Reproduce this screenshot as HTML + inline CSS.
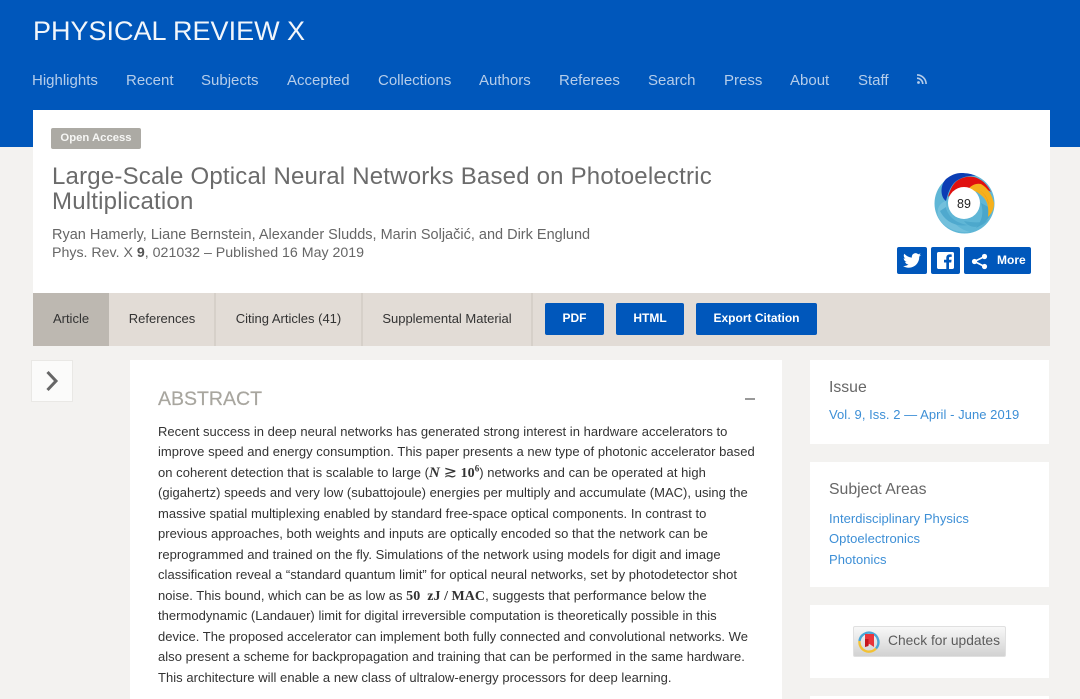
<!DOCTYPE html>
<html><head><meta charset="utf-8"><style>
*{box-sizing:border-box}
html,body{margin:0;padding:0}
body{width:1080px;height:699px;overflow:hidden;position:relative;background:#f3f2f0;font-family:"Liberation Sans",sans-serif;color:#333}
.a{position:absolute;white-space:nowrap}
.nav{top:71px;font-size:15px;line-height:20px;color:#b5cdea}
.tab{top:293px;height:53px;line-height:52px;font-size:13px;color:#333;text-align:center;background:#e2dcd6;border-right:2px solid #d6d0c9}
.btn{top:303px;height:32px;line-height:30px;background:#0057bb;color:#fff;font-size:12px;font-weight:bold;text-align:center;border-radius:2px}
.l{left:158px;font-size:13px;line-height:20px;color:#333;letter-spacing:.03px}
.card{background:#fff;left:810px;width:239px}
.lnk{left:829px;font-size:13px;line-height:18px;color:#3d8fd6;letter-spacing:.05px}
.h{left:829px;font-size:15.8px;line-height:20px;color:#666}
.sb{background:#0057bb;border-radius:2px;top:247px;height:27px}
.m{font-family:"Liberation Serif",serif;font-weight:bold}
</style></head><body>
<div class="a" style="left:0;top:0;width:1080px;height:147px;background:#0057bb"></div>
<div class="a" style="left:33px;top:12px;font-size:27px;line-height:38px;color:#f2f6fb">PHYSICAL REVIEW X</div>
<div class="a nav" style="left:32px">Highlights</div>
<div class="a nav" style="left:126px">Recent</div>
<div class="a nav" style="left:201px">Subjects</div>
<div class="a nav" style="left:287px">Accepted</div>
<div class="a nav" style="left:378px">Collections</div>
<div class="a nav" style="left:479px">Authors</div>
<div class="a nav" style="left:559px">Referees</div>
<div class="a nav" style="left:648px">Search</div>
<div class="a nav" style="left:724px">Press</div>
<div class="a nav" style="left:790px">About</div>
<div class="a nav" style="left:858px">Staff</div>
<svg class="a" style="left:917px;top:74px" width="10" height="10" viewBox="0 0 10 10"><circle cx="1.5" cy="8.5" r="1.4" fill="#b5cdea"/><path d="M0 4.2a5.8 5.8 0 0 1 5.8 5.8M0 .9A9.1 9.1 0 0 1 9.1 10" fill="none" stroke="#b5cdea" stroke-width="1.6"/></svg>

<div class="a" style="left:33px;top:110px;width:1017px;height:183px;background:#fff"></div>
<div class="a" style="left:51px;top:128px;width:90px;height:21px;background:#acaaa4;border-radius:2px;color:#f6f6f4;font-size:11.3px;font-weight:bold;line-height:21px;text-align:center">Open Access</div>
<div class="a" style="left:52px;top:164px;font-size:24px;line-height:25px;color:#6b6b6b;letter-spacing:.2px">Large-Scale Optical Neural Networks Based on Photoelectric<br>Multiplication</div>
<div class="a" style="left:52px;top:226px;font-size:14.5px;line-height:18px;color:#666">Ryan Hamerly, Liane Bernstein, Alexander Sludds, Marin Soljačić, and Dirk Englund</div>
<div class="a" style="left:52px;top:244px;font-size:14.2px;line-height:18px;color:#666">Phys. Rev. X <b style="color:#555">9</b>, 021032 – Published 16 May 2019</div>

<svg class="a" style="left:934px;top:173px" width="61" height="61" viewBox="0 0 61 61">
<circle cx="30.5" cy="30.500" r="30" fill="#5fb6d6"/>
<path d="M12 28C4 30 1 40 6 47 12 56 24 60 36 59 24 56 12 46 12 28Z" fill="#73c0dc"/>
<path d="M30 48C36 56 46 56 54 47 48 50 40 50 30 48Z" fill="#4da8cc"/>
<path d="M47 30C50 40 48 48 42 55 52 50 58 42 58 36Z" fill="#4aa6cb"/>
<path d="M12 34C14 44 22 50 34 52 24 54 12 50 6 38Z" fill="#4fa9ce"/>
<path d="M12 28C6 24 6 12 12 6 17 2 22 0 27 0 33 0 38 1 42 3 36 2 27 4 21 9 16 14 14 20 12 28Z" fill="#0b3db4"/>
<path d="M14 24C17 14 20 9 26 6 32 3 38 3 43 5 50 8 54 13 57 19 53 16 48 15 42 15 32 14 22 16 14 24Z" fill="#e0100f"/>
<path d="M34 16C38 12 42 10 47 11 54 15 58 22 60 30 60 36 58 40 54 44 55 36 54 28 48 23 44 19 39 17 34 16Z" fill="#f5b01c"/>
<path d="M45 17C50 20 54 25 55 32L53 26C51 22 48 19 45 17Z" fill="#e9801a"/>
<circle cx="30" cy="30" r="16" fill="#fff"/>
<text x="30" y="35" text-anchor="middle" font-family="Liberation Sans" font-size="12.500" fill="#222">89</text></svg>

<div class="a sb" style="left:897px;width:30px"></div>
<svg class="a" style="left:903px;top:253px" width="18" height="15" viewBox="0 0 18 15"><path d="M18 1.800c-.7.3-1.400.5-2.100.6.8-.5 1.300-1.200 1.600-2-.7.4-1.500.7-2.300.9A3.700 3.700 0 0 0 8.900 4.600C5.900 4.400 3.200 3 1.300.7.300 2.400.800 4.500 2.400 5.600c-.6 0-1.200-.2-1.700-.5 0 1.800 1.300 3.300 3 3.700-.5.100-1.100.2-1.700.1.500 1.500 1.900 2.500 3.500 2.600A7.500 7.500 0 0 1 0 13c1.700 1.100 3.600 1.700 5.700 1.700 6.900 0 10.800-5.800 10.500-11 .7-.5 1.300-1.200 1.800-1.900z" fill="#fff"/></svg>
<div class="a sb" style="left:931px;width:29px"></div>
<svg class="a" style="left:937px;top:252px" width="17" height="17" viewBox="0 0 17 17"><path d="M1.500 0h14c.8 0 1.500.7 1.500 1.500v14c0 .8-.7 1.500-1.500 1.500H12v-6.500h2.200l.4-2.700H12V6.200c0-.8.300-1.300 1.300-1.300h1.400V2.500c-.3 0-1.100-.1-2-.1-2 0-3.400 1.200-3.400 3.500v1.900H7v2.700h2.300V17H1.500C.7 17 0 16.300 0 15.500v-14C0 .7.700 0 1.500 0z" fill="#fff"/></svg>
<div class="a sb" style="left:964px;width:67px"></div>
<svg class="a" style="left:971px;top:253px" width="17" height="17" viewBox="0 0 17 17"><path d="M13.500 3.500 3.500 8.500l10 5" fill="none" stroke="#fff" stroke-width="1.700"/><circle cx="13.500" cy="3.500" r="2.600" fill="#fff"/><circle cx="3.500" cy="8.500" r="2.600" fill="#fff"/><circle cx="13.500" cy="13.500" r="2.600" fill="#fff"/></svg>
<div class="a" style="left:997px;top:253px;font-size:12px;line-height:15px;font-weight:bold;color:#fff">More</div>

<div class="a" style="left:33px;top:293px;width:1017px;height:53px;background:#e2dcd6"></div>
<div class="a tab" style="left:33px;width:76px;background:#bdb8b1;border:0">Article</div>
<div class="a tab" style="left:109px;width:107px;padding-left:1px">References</div>
<div class="a tab" style="left:216px;width:147px">Citing Articles (41)</div>
<div class="a tab" style="left:363px;width:170px">Supplemental Material</div>
<div class="a btn" style="left:545px;width:59px">PDF</div>
<div class="a btn" style="left:616px;width:68px">HTML</div>
<div class="a btn" style="left:696px;width:121px">Export Citation</div>

<div class="a" style="left:31px;top:360px;width:42px;height:42px;background:#fbfbfa;border:1px solid #e9e8e5"></div>
<svg class="a" style="left:45px;top:370px" width="14" height="22" viewBox="0 0 14 22"><path d="M2.500 2 11 11l-8.500 9" fill="none" stroke="#666" stroke-width="3"/></svg>

<div class="a" style="left:130px;top:360px;width:652px;height:339px;background:#fff"></div>
<div class="a" style="left:158px;top:387px;font-size:19.500px;line-height:24px;color:#a8a69f;-webkit-text-stroke:.2px #a8a69f">ABSTRACT</div>
<div class="a" style="left:745px;top:398px;width:10px;height:2px;background:#999"></div>
<div class="a l" style="top:422px">Recent success in deep neural networks has generated strong interest in hardware accelerators to</div>
<div class="a l" style="top:442px">improve speed and energy consumption. This paper presents a new type of photonic accelerator based</div>
<div class="a l" style="top:463px">on coherent detection that is scalable to large (<i class="m" style="font-size:15px">N</i> <span style="font-family:'Liberation Serif',serif;font-size:16px">≳</span> <span class="m" style="font-size:14px">10<sup style="font-size:9px;line-height:0">6</sup></span>) networks and can be operated at high</div>
<div class="a l" style="top:483px">(gigahertz) speeds and very low (subattojoule) energies per multiply and accumulate (MAC), using the</div>
<div class="a l" style="top:504px">massive spatial multiplexing enabled by standard free-space optical components. In contrast to</div>
<div class="a l" style="top:524px">previous approaches, both weights and inputs are optically encoded so that the network can be</div>
<div class="a l" style="top:545px">reprogrammed and trained on the fly. Simulations of the network using models for digit and image</div>
<div class="a l" style="top:565px">classification reveal a “standard quantum limit” for optical neural networks, set by photodetector shot</div>
<div class="a l" style="top:586px">noise. This bound, which can be as low as <span class="m" style="font-size:14px">50&nbsp; zJ / MAC</span>, suggests that performance below the</div>
<div class="a l" style="top:606px">thermodynamic (Landauer) limit for digital irreversible computation is theoretically possible in this</div>
<div class="a l" style="top:627px">device. The proposed accelerator can implement both fully connected and convolutional networks. We</div>
<div class="a l" style="top:647px">also present a scheme for backpropagation and training that can be performed in the same hardware.</div>
<div class="a l" style="top:668px">This architecture will enable a new class of ultralow-energy processors for deep learning.</div>

<div class="a card" style="top:360px;height:84px"></div>
<div class="a h" style="top:378px">Issue</div>
<div class="a lnk" style="top:406px">Vol. 9, Iss. 2 — April - June 2019</div>
<div class="a card" style="top:462px;height:125px"></div>
<div class="a h" style="top:480px">Subject Areas</div>
<div class="a lnk" style="top:510px">Interdisciplinary Physics</div>
<div class="a lnk" style="top:530px">Optoelectronics</div>
<div class="a lnk" style="top:551px">Photonics</div>
<div class="a card" style="top:605px;height:73px"></div>
<div class="a" style="left:853px;top:626px;width:153px;height:31px;border:1px solid #e0e0e0;border-radius:2px;background:linear-gradient(#f8f8f8,#d2d2d2)"></div>
<svg class="a" style="left:858px;top:630px" width="22" height="24" viewBox="0 0 22 24"><path d="M1.500 11A9.500 9.500 0 1 1 18 18.500" fill="none" stroke="#4aa5d6" stroke-width="2.400"/><path d="M1.500 11A9.500 9.500 0 0 0 18 18.500" fill="none" stroke="#f3c234" stroke-width="2.400"/><path d="M7 4h9v13l-4.500-3L7 17z" fill="#e8343a"/><path d="M7 9h3.500v7L7 17z" fill="#c4161c"/></svg>
<div class="a" style="left:888px;top:632px;font-size:13.800px;line-height:18px;color:#5c5c5c">Check for updates</div>
<div class="a card" style="top:696px;height:3px"></div>
</body></html>
